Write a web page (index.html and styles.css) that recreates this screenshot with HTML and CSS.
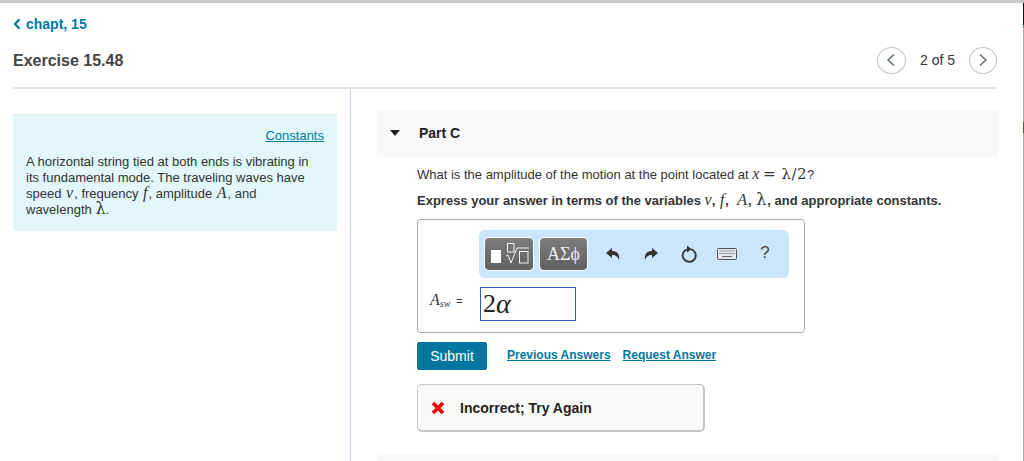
FILE: index.html
```html
<!DOCTYPE html>
<html lang="en">
<head>
<meta charset="utf-8">
<title>Exercise 15.48</title>
<link rel="stylesheet" href="styles.css">
</head>
<body>
<div class="page">
  <header class="head">
    <a class="back"><svg class="back-icon" width="8" height="12" viewBox="0 0 8 12"><path d="M6.500 1.200 2 6l4.500 4.800" fill="none" stroke="#00779e" stroke-width="2.200"/></svg>chapt, 15</a>
    <div class="title-row">
      <h1 class="title">Exercise 15.48</h1>
      <nav class="pager">
        <span class="circle circle-prev"><svg width="10" height="14" viewBox="0 0 10 14"><path d="M8 1.500 2 7l6 5.500" fill="none" stroke="#5f6b70" stroke-width="1.400"/></svg></span>
        <span class="count">2 of 5</span>
        <span class="circle"><svg width="10" height="14" viewBox="0 0 10 14"><path d="M2 1.500 8 7l-6 5.500" fill="none" stroke="#5f6b70" stroke-width="1.400"/></svg></span>
      </nav>
    </div>
  </header>
  <main class="columns">
    <aside class="side">
      <section class="intro">
        <a class="constants">Constants</a>
        <p class="intro-text">A horizontal string tied at both ends is vibrating in its fundamental mode. The traveling waves have speed <i class="m big wide">v</i>, frequency <i class="m big wide">f</i>, amplitude <i class="m big wide">A</i>, and wavelength <span class="m-up big">λ</span>.</p>
      </section>
    </aside>
    <section class="content">
      <div class="part-head"><span class="caret"></span><h2 class="part-title">Part C</h2></div>
      <div class="part-body">
        <p class="question">What is the amplitude of the motion at the point located at <i class="m big">x</i> <span class="m-up q-math">= λ/2</span>?</p>
        <p class="express">Express your answer in terms of the variables <i class="m reg big">v</i>, <i class="m reg big wide">f</i>,&nbsp; <i class="m reg big wide">A</i>, <span class="m-up reg big wide">λ</span>, and appropriate constants.</p>
        <div class="answer-box">
          <div class="toolbar">
            <span class="tool tool-tpl">
              <svg width="48" height="32" viewBox="0 0 48 32"><rect x="6" y="12" width="10" height="13" fill="#fff"/><g fill="none" stroke="#f2f2f2" stroke-width="1"><rect x="22.500" y="5.500" width="6.500" height="8.500"/><rect x="34.500" y="13.500" width="8.500" height="11.500"/><path d="M21 18l2-1 3 8 6-15h12"/></g></svg>
            </span>
            <span class="tool tool-sym">ΑΣϕ</span>
            <span class="icons">
              <span class="cell"><svg width="16" height="14" viewBox="0 0 16 14"><path d="M1 6l6-5v3c5 0 8 3 7 9-1-3-3-5-7-5v3z" fill="#333"/></svg></span>
              <span class="cell"><svg width="16" height="14" viewBox="0 0 16 14"><path d="M15 6L9 1v3C4 4 1 7 2 13c1-3 3-5 7-5v3z" fill="#333"/></svg></span>
              <span class="cell"><svg width="18" height="18" viewBox="0 0 18 18"><path d="M11 4.100a6.500 6.500 0 1 1-4.200.2" fill="none" stroke="#333" stroke-width="1.800"/><path d="M7 .5l4.500 3.500-4.500 3.500z" fill="#333"/></svg></span>
              <span class="cell"><svg width="20" height="12" viewBox="0 0 20 12"><rect x=".5" y=".5" width="19" height="11" rx="1" fill="#dfe6ec" stroke="#555"/><path d="M2.500 3h15M2.500 5.500h15" stroke="#666" stroke-dasharray="1 1"/><path d="M5 8.500h10" stroke="#666"/></svg></span>
              <span class="cell help">?</span>
            </span>
          </div>
          <div class="entry">
            <span class="label"><i class="sym">A</i><i class="sub">sw</i><span class="eq">=</span></span>
            <span class="field"><span class="two">2</span><i class="alpha">α</i></span>
          </div>
        </div>
        <div class="actions">
          <button class="submit">Submit</button>
          <a class="link">Previous Answers</a>
          <a class="link">Request Answer</a>
        </div>
        <div class="feedback">
          <svg width="14" height="14" viewBox="0 0 14 14"><path d="M2 2l10 10M12 2 2 12" stroke="#f00000" stroke-width="3.600"/></svg>
          <span>Incorrect; Try Again</span>
        </div>
      </div>
      <div class="next-part"></div>
    </section>
  </main>
</div>
</body>
</html>
```
FILE: styles.css
```css
* { box-sizing: border-box; }
html, body { margin: 0; height: 461px; overflow: hidden; background: #fff; }
body { font-family: "Liberation Sans", Arial, sans-serif; color: #333; }
.page { position: relative; height: 461px; border-top: 3px solid #c9c9c9; border-right: 1px solid #aaa; display: flex; flex-direction: column; }
.page::after { content: ""; position: absolute; top: 0; right: -1px; width: 1px; height: 130px; background: linear-gradient(#111 0 22px, #3e8e96 22px 25px, transparent 25px 119px, #7a4a30 119px 130px); }
.head { padding: 0 26px 0 13px; }
.back { display: flex; align-items: center; gap: 5px; margin-top: 13px; height: 16px; font-size: 14px; font-weight: 700; color: #00779e; line-height: 16px; }
.title-row { display: flex; justify-content: space-between; align-items: center; margin-top: 14px; height: 30px; }
.title { margin: 0; font-size: 16px; font-weight: 700; color: #444; line-height: 20px; }
.pager { display: flex; align-items: center; gap: 14px; padding-bottom: 2px; }
.circle { width: 28px; height: 27px; border: 1px solid #c4c4c4; border-radius: 50%; display: flex; align-items: center; justify-content: center; }
.circle-prev { width: 29px; }
.count { font-size: 14px; color: #333; }
.columns { flex: 1; margin: 11px 26px 0 13px; display: grid; grid-template-columns: 338px 1fr; border-top: 2px solid #e4e4e4; min-height: 0; }
.side { border-right: 1px solid #c5d5e4; padding-top: 25px; }
.intro { width: 324px; height: 117px; background: #e1f7f9; border-top: 1px solid #dcebee; padding: 13px 13px; display: flex; flex-direction: column; }
.constants { align-self: flex-end; font-size: 13px; line-height: 16px; color: #007a9c; text-decoration: underline; }
.intro-text { margin: 10px 0 0; font-size: 13px; line-height: 16px; color: #333; width: 290px; }
.m { font-family: "Liberation Serif", serif; font-style: italic; }
.m-up { font-family: "DejaVu Serif", "Liberation Serif", serif; font-style: normal; }
.big { font-size: 16px; line-height: 0; }
.wide { padding: 0 1px; }
.q-math { font-size: 15px; line-height: 0; letter-spacing: .5px; }
.reg { font-weight: 400; }
.content { padding-left: 26px; margin-right: -1px; display: flex; flex-direction: column; min-width: 0; }
.part-head { margin-top: 21px; height: 47px; background: #f8f8f8; display: flex; align-items: center; padding-left: 13px; }
.caret { width: 0; height: 0; border: 5.500px solid transparent; border-top: 6px solid #222; border-bottom: 0; margin: 0 18px 2px 0; }
.part-title { margin: 0; font-size: 14px; font-weight: 700; color: #222; padding: 0 0 2px 1px; }
.part-body { padding-left: 40px; flex: 1; min-height: 0; }
.question { margin: 9px 0 0; font-size: 13px; line-height: 18px; color: #333; }
.express { margin: 8px 0 0; font-size: 13px; line-height: 18px; font-weight: 700; color: #333; }
.answer-box { margin-top: 9px; width: 388px; height: 114px; border: 1px solid #a9a9a9; border-radius: 4px; padding: 10px 16px 0 10px; display: flex; flex-direction: column; }
.toolbar { margin-left: 51px; width: 310px; height: 48px; background: #cbe5fd; border-radius: 6px; padding: 7px 0 0 5px; display: flex; align-items: flex-start; gap: 5px; }
.tool { height: 34px; border-radius: 5px; background: linear-gradient(#7e7e7e, #5f5f5f); border: 1px solid #fff; color: #eee; display: flex; align-items: center; justify-content: center; }
.tool-tpl { width: 50px; }
.tool-sym { width: 49px; font-family: "Liberation Serif", serif; font-size: 18px; }
.icons { display: grid; grid-auto-flow: column; grid-auto-columns: 38px; height: 34px; margin-left: 1px; }
.cell { display: flex; align-items: center; justify-content: center; }
.help { font-size: 17px; color: #444; padding-bottom: 2px; }
.entry { display: flex; align-items: center; margin-top: 9px; }
.label { display: block; width: 52px; padding: 0 0 4px 2px; font-family: "Liberation Serif", serif; color: #333; line-height: 18px; }
.sym { font-size: 16px; }
.sub { font-size: 10px; vertical-align: -2px; }
.eq { font-family: "Liberation Sans", sans-serif; font-size: 11px; margin-left: 6px; }
.field { width: 96px; height: 34px; border: 1px solid #2f5bc9; display: flex; align-items: center; padding-left: 2px; font-family: "Liberation Serif", serif; font-size: 26px; color: #222; }
.alpha { font-size: 28px; }
.actions { display: flex; align-items: center; margin-top: 9px; }
.submit { width: 70px; height: 28px; background: #00779e; color: #fff; border: 0; border-radius: 2px; padding: 0; font: 400 14px "Liberation Sans", sans-serif; margin-right: 20px; }
.link { font-size: 12px; font-weight: 700; color: #00779e; text-decoration: underline; margin: 0 12px 2px 0; }
.feedback { margin-top: 14px; width: 288px; height: 48px; background: #fafafa; border: 1px solid #c6c6c6; border-bottom-width: 2px; border-right-width: 2px; border-radius: 5px; display: flex; align-items: center; gap: 15px; padding: 0 0 0 13px; font-size: 14px; font-weight: 700; color: #222; }
.next-part { height: 6px; background: #f8f8f8; flex: none; }
```
